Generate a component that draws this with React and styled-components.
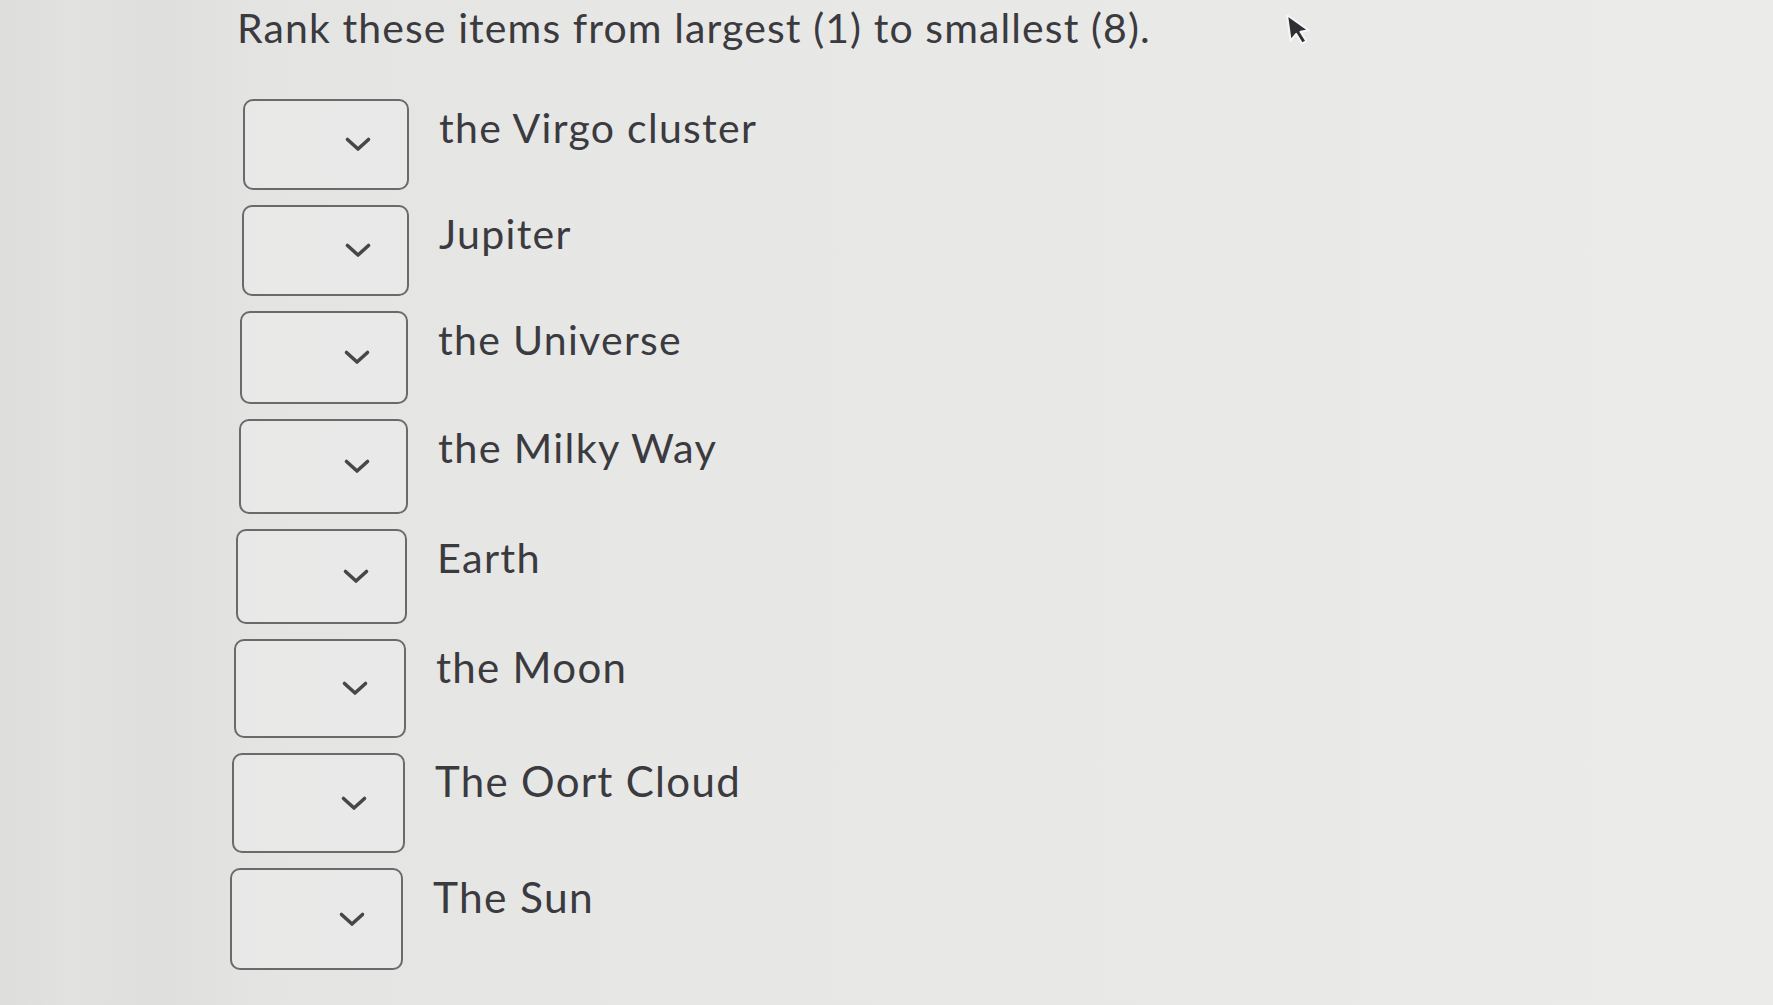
import React from "react";
import styled, { createGlobalStyle } from "styled-components";

const GlobalStyle = createGlobalStyle`
  html, body {
    margin: 0;
    padding: 0;
    height: 100%;
  }
  body {
    background: linear-gradient(90deg, #dddddc 0%, #e2e2e1 4%, #dfdfde 9%, #e4e4e3 15%, #e7e7e6 35%, #e9e9e8 70%, #ebebea 100%);
    font-family: Lato, "Open Sans", sans-serif;
    color: #3a3a3f;
    overflow: hidden;
  }
`;

const Page = styled.main`
  position: relative;
  width: 1773px;
  height: 1005px;
  box-sizing: border-box;
  padding: 4px 0 0 237px;
`;

const Title = styled.h1`
  margin: 0;
  font-size: 41px;
  line-height: 47px;
  font-weight: 400;
  letter-spacing: 1.1px;
`;

const List = styled.ol`
  list-style: none;
  margin: 48px 0 0;
  padding: 0;
  display: flex;
  flex-direction: column;
  gap: 15px;
`;

const Row = styled.li`
  display: flex;
  align-items: flex-start;
  gap: 30px;
  margin-left: ${(p) => p.$shift}px;
`;

const Select = styled.button`
  position: relative;
  flex: none;
  width: ${(p) => p.$w}px;
  height: ${(p) => p.$h}px;
  box-sizing: border-box;
  border: 2px solid #6a6a6b;
  border-radius: 10px;
  background: rgba(238, 238, 237, 0.5);
  padding: 0 35px 0 0;
  display: flex;
  align-items: center;
  justify-content: flex-end;
  cursor: pointer;
`;

const Label = styled.span`
  padding-top: 5px;
  font-size: ${(p) => p.$size}px;
  line-height: 47px;
  letter-spacing: 1.3px;
  white-space: nowrap;
`;

const Pointer = styled.svg`
  position: absolute;
  left: 1282px;
  top: 10px;
  width: 28px;
  height: 40px;
  transform: rotate(-8deg);
  transform-origin: 5px 5px;
`;

const Chevron = () => (
  <svg width="28" height="17" viewBox="0 0 28 17" fill="none">
    <path
      d="M3.5 3.5 L14 13 L24.5 3.5"
      stroke="#47474a"
      strokeWidth="3.6"
      strokeLinecap="round"
      strokeLinejoin="round"
    />
  </svg>
);

const items = [
  { label: "the Virgo cluster", shift: 6, w: 166, h: 91, size: 41 },
  { label: "Jupiter", shift: 5, w: 167, h: 91, size: 41 },
  { label: "the Universe", shift: 3, w: 168, h: 93, size: 41 },
  { label: "the Milky Way", shift: 2, w: 169, h: 95, size: 41.5 },
  { label: "Earth", shift: -1, w: 171, h: 95, size: 41.5 },
  { label: "the Moon", shift: -3, w: 172, h: 99, size: 42 },
  { label: "The Oort Cloud", shift: -5, w: 173, h: 100, size: 42 },
  { label: "The Sun", shift: -7, w: 173, h: 102, size: 42.5 },
];

export default function App() {
  return (
    <>
      <GlobalStyle />
      <Page>
        <Title>Rank these items from largest (1) to smallest (8).</Title>
        <List>
          {items.map((it) => (
            <Row key={it.label} $shift={it.shift}>
              <Select $w={it.w} $h={it.h} aria-label={`Rank for ${it.label}`}>
                <Chevron />
              </Select>
              <Label $size={it.size}>{it.label}</Label>
            </Row>
          ))}
        </List>
        <Pointer viewBox="0 0 28 40">
          <path
            d="M5 5 L5 31 L11.5 25 L16 35.5 L20.5 33.5 L16 23.5 L24.5 23.2 Z"
            fill="#2e2f33"
            stroke="#f6f6f6"
            strokeWidth="2"
            strokeLinejoin="round"
          />
        </Pointer>
      </Page>
    </>
  );
}
